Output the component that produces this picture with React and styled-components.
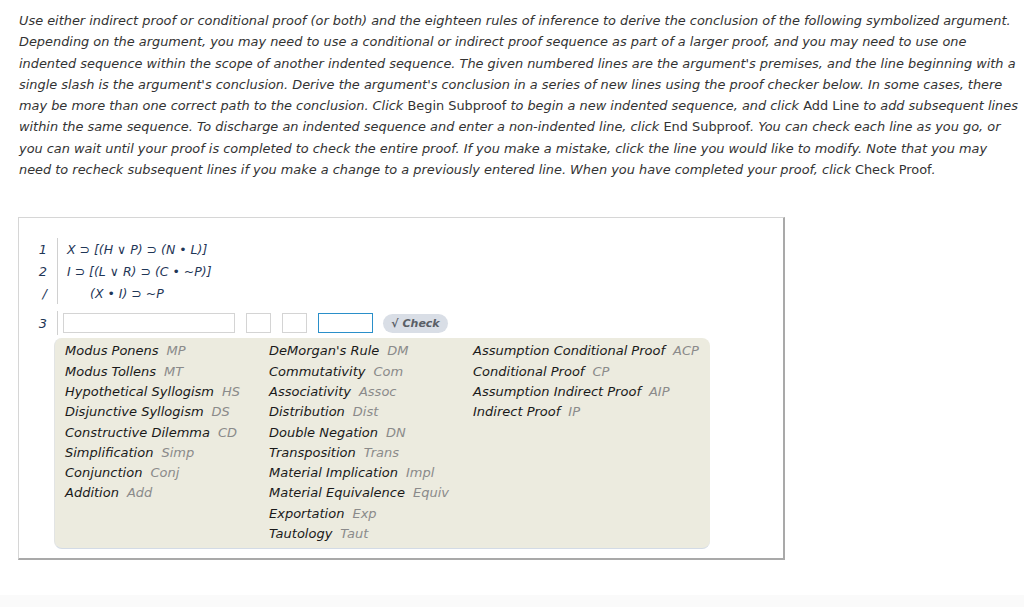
import React from "react";
import styled, { createGlobalStyle } from "styled-components";

const GlobalStyle = createGlobalStyle`
  html, body {
    margin: 0;
    padding: 0;
    background: #fff;
  }
  body {
    font-family: "DejaVu Sans", Verdana, sans-serif;
    font-size: 13px;
    color: #333;
  }
`;

const Page = styled.div`
  height: 607px;
  box-sizing: border-box;
  padding: 10px 0 0 19px;
  background: linear-gradient(#fff 0, #fff 595px, #fafafa 595px);
`;

const Instructions = styled.p`
  margin: 0;
  font-style: italic;
  font-size: 12.9px;
  line-height: 21.3px;
  color: #333;
  white-space: nowrap;
`;

const Plain = styled.span`
  font-style: normal;
`;

const ProofBox = styled.div`
  margin-top: 37px;
  margin-left: -1px;
  width: 767px;
  height: 343px;
  box-sizing: border-box;
  border: 1px solid #d6d6d6;
  border-right: 2px solid #a9a9a9;
  border-bottom: 2px solid #a9a9a9;
  padding: 20px 0 0 0;
`;

const Lines = styled.div`
  display: flex;
  flex-direction: column;
`;

const Line = styled.div`
  display: flex;
  align-items: center;
  height: 22px;
`;

const Num = styled.span`
  width: 28px;
  text-align: right;
  font-style: italic;
  color: #1f3657;
  padding-right: 10px;
`;

const Bar = styled.div`
  align-self: stretch;
  width: 1px;
  background: #d0d0d0;
`;

const Formula = styled.span`
  padding-left: ${(p) => (p.$indent ? 32 : 9)}px;
  font-style: italic;
  color: #1f3657;
  font-size: 12.5px;
  white-space: pre;
`;

const EntryRow = styled.div`
  display: flex;
  align-items: center;
  margin-top: 7px;
  height: 24px;
`;

const Field = styled.div`
  box-sizing: border-box;
  height: 20px;
  width: ${(p) => p.$w}px;
  margin-left: ${(p) => p.$ml}px;
  border: 1px solid ${(p) => (p.$active ? "#2a8fc9" : "#d4d4d4")};
  background: #fff;
`;

const CheckButton = styled.button`
  margin-left: 10px;
  height: 19px;
  width: 65px;
  border: none;
  border-radius: 10px;
  background: #d9dee6;
  color: #5a5f66;
  font-family: "DejaVu Sans", Verdana, sans-serif;
  font-style: italic;
  font-weight: bold;
  font-size: 11px;
  padding: 0;
`;

const RulesPanel = styled.div`
  margin: 3px 0 0 35px;
  width: 656px;
  height: 211px;
  box-sizing: border-box;
  background: #ecebdf;
  border-radius: 8px;
  border-bottom: 1px solid #d3dbe6;
  border-left: 1px solid #e2e4e4;
  padding: 3px 0 0 10px;
  display: grid;
  grid-template-columns: 204px 204px 1fr;
`;

const RuleCol = styled.div`
  display: flex;
  flex-direction: column;
`;

const Rule = styled.div`
  height: 20.3px;
  line-height: 20.3px;
  font-style: italic;
  font-size: 13px;
  color: #1a1a1a;
  white-space: nowrap;
`;

const Abbr = styled.span`
  color: #8a8a8a;
  margin-left: 8px;
`;

const col1 = [
  ["Modus Ponens", "MP"],
  ["Modus Tollens", "MT"],
  ["Hypothetical Syllogism", "HS"],
  ["Disjunctive Syllogism", "DS"],
  ["Constructive Dilemma", "CD"],
  ["Simplification", "Simp"],
  ["Conjunction", "Conj"],
  ["Addition", "Add"],
];
const col2 = [
  ["DeMorgan's Rule", "DM"],
  ["Commutativity", "Com"],
  ["Associativity", "Assoc"],
  ["Distribution", "Dist"],
  ["Double Negation", "DN"],
  ["Transposition", "Trans"],
  ["Material Implication", "Impl"],
  ["Material Equivalence", "Equiv"],
  ["Exportation", "Exp"],
  ["Tautology", "Taut"],
];
const col3 = [
  ["Assumption Conditional Proof", "ACP"],
  ["Conditional Proof", "CP"],
  ["Assumption Indirect Proof", "AIP"],
  ["Indirect Proof", "IP"],
];

const premises = [
  ["1", "X \u2283 [(H \u2228 P) \u2283 (N \u2022 L)]"],
  ["2", "I \u2283 [(L \u2228 R) \u2283 (C \u2022 ~P)]"],
  ["/", "(X \u2022 I) \u2283 ~P", true],
];

const App = () => {
  return (
    <>
      <GlobalStyle />
      <Page>
        <Instructions>
          Use either indirect proof or conditional proof (or both) and the eighteen rules of inference to derive the conclusion of the following symbolized argument.
          <br />
          Depending on the argument, you may need to use a conditional or indirect proof sequence as part of a larger proof, and you may need to use one
          <br />
          indented sequence within the scope of another indented sequence. The given numbered lines are the argument's premises, and the line beginning with a
          <br />
          single slash is the argument's conclusion. Derive the argument's conclusion in a series of new lines using the proof checker below. In some cases, there
          <br />
          may be more than one correct path to the conclusion. Click <Plain>Begin Subproof</Plain> to begin a new indented sequence, and click <Plain>Add Line</Plain> to add subsequent lines
          <br />
          within the same sequence. To discharge an indented sequence and enter a non-indented line, click <Plain>End Subproof</Plain>. You can check each line as you go, or
          <br />
          you can wait until your proof is completed to check the entire proof. If you make a mistake, click the line you would like to modify. Note that you may
          <br />
          need to recheck subsequent lines if you make a change to a previously entered line. When you have completed your proof, click <Plain>Check Proof</Plain>.
        </Instructions>

        <ProofBox>
          <Lines>
            {premises.map(([n, f, ind]) => (
              <Line key={n}>
                <Num>{n}</Num>
                <Bar />
                <Formula $indent={ind}>{f}</Formula>
              </Line>
            ))}
          </Lines>
          <EntryRow>
            <Num>3</Num>
            <Bar />
            <Field $w={172} $ml={5} />
            <Field $w={25} $ml={11} />
            <Field $w={25} $ml={11} />
            <Field $w={55} $ml={11} $active />
            <CheckButton>{"\u221A Check"}</CheckButton>
          </EntryRow>
          <RulesPanel>
            {[col1, col2, col3].map((col, i) => (
              <RuleCol key={i}>
                {col.map(([name, abbr]) => (
                  <Rule key={abbr}>
                    {name}
                    <Abbr>{abbr}</Abbr>
                  </Rule>
                ))}
              </RuleCol>
            ))}
          </RulesPanel>
        </ProofBox>
      </Page>
    </>
  );
};

export default App;
